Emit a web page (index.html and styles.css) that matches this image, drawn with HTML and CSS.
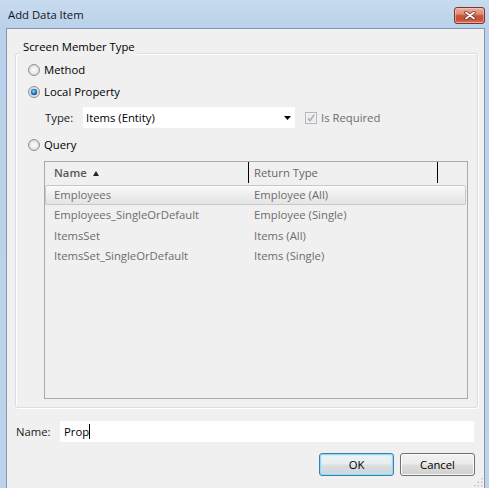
FILE: index.html
```html
<!DOCTYPE html>
<html>
<head>
<meta charset="utf-8">
<link rel="stylesheet" href="styles.css">
</head>
<body>
<div class="window">
  <div class="titlebar">
    <span class="title">Add Data Item</span>
    <div class="close">
      <svg width="12" height="9" viewBox="0 0 12 9">
        <path d="M2 1.5 L10 7.5 M10 1.5 L2 7.5" stroke="#6e2a1f" stroke-width="3.4" stroke-linecap="round"/>
        <path d="M2 1.5 L10 7.5 M10 1.5 L2 7.5" stroke="#ffffff" stroke-width="1.8" stroke-linecap="round"/>
      </svg>
    </div>
  </div>
  <div class="client">
    <div class="group">
      <div class="legend">Screen Member Type</div>
      <div class="radio-row first">
        <svg class="radio" width="12" height="12" viewBox="0 0 12 12">
          <defs><radialGradient id="ru1" cx="0.5" cy="0.5" r="0.5"><stop offset="0" stop-color="#fdfdfd"/><stop offset="0.6" stop-color="#ececec"/><stop offset="1" stop-color="#cfcfcf"/></radialGradient></defs>
          <circle cx="6" cy="6" r="5.5" fill="url(#ru1)" stroke="#939393"/>
        </svg>
        <span>Method</span>
      </div>
      <div class="radio-row second">
        <svg class="radio" width="12" height="12" viewBox="0 0 12 12">
          <defs>
            <radialGradient id="ru2" cx="0.5" cy="0.5" r="0.5"><stop offset="0" stop-color="#fdfdfd"/><stop offset="0.6" stop-color="#ececec"/><stop offset="1" stop-color="#cfcfcf"/></radialGradient>
            <radialGradient id="rb2" cx="0.45" cy="0.4" r="0.6"><stop offset="0" stop-color="#a9dcf8"/><stop offset="0.45" stop-color="#3a93d6"/><stop offset="1" stop-color="#0f4f8e"/></radialGradient>
          </defs>
          <circle cx="6" cy="6" r="5.5" fill="url(#ru2)" stroke="#939393"/>
          <circle cx="6" cy="6" r="3.2" fill="url(#rb2)"/>
        </svg>
        <span>Local Property</span>
      </div>
      <div class="type-row">
        <span class="type-label">Type:</span>
        <div class="combo">
          <span class="combo-text">Items (Entity)</span>
          <svg width="7" height="4" viewBox="0 0 7 4"><polygon points="0,0 7,0 3.5,4" fill="#000"/></svg>
        </div>
        <svg class="check" width="12" height="12" viewBox="0 0 12 12">
          <rect x="0.5" y="0.5" width="11" height="11" fill="#f4f4f4" stroke="#b5b5b5"/>
          <rect x="2" y="2" width="8" height="8" fill="#ebebeb"/>
          <path d="M3 6.2 L5 8.6 L9.2 2.6" fill="none" stroke="#a3b3c6" stroke-width="1.6"/>
        </svg>
        <span class="disabled">Is Required</span>
      </div>
      <div class="radio-row third">
        <svg class="radio" width="12" height="12" viewBox="0 0 12 12">
          <defs><radialGradient id="ru3" cx="0.5" cy="0.5" r="0.5"><stop offset="0" stop-color="#fdfdfd"/><stop offset="0.6" stop-color="#ececec"/><stop offset="1" stop-color="#cfcfcf"/></radialGradient></defs>
          <circle cx="6" cy="6" r="5.5" fill="url(#ru3)" stroke="#939393"/>
        </svg>
        <span>Query</span>
      </div>
      <div class="list">
        <div class="list-header">
          <div class="h1">Name<svg class="sort" width="6" height="5" viewBox="0 0 6 5"><polygon points="3,0 6,5 0,5" fill="#222"/></svg></div>
          <div class="divider"></div>
          <div class="h2">Return Type</div>
          <div class="divider"></div>
        </div>
        <div class="row selected"><div class="c1">Employees</div><div class="c2">Employee (All)</div></div>
        <div class="row"><div class="c1">Employees_SingleOrDefault</div><div class="c2">Employee (Single)</div></div>
        <div class="row"><div class="c1">ItemsSet</div><div class="c2">Items (All)</div></div>
        <div class="row"><div class="c1">ItemsSet_SingleOrDefault</div><div class="c2">Items (Single)</div></div>
      </div>
    </div>
    <div class="name-row">
      <span class="name-label">Name:</span>
      <div class="name-input">Prop<span class="caret"></span></div>
    </div>
    <div class="buttons">
      <div class="btn default">OK</div>
      <div class="btn">Cancel</div>
    </div>
    <svg class="grip" width="10" height="10" viewBox="0 0 10 10">
      <g fill="#c2c2c2">
        <rect x="8" y="1" width="1.5" height="1.5"/>
        <rect x="8" y="4.5" width="1.5" height="1.5"/><rect x="4.5" y="4.5" width="1.5" height="1.5"/>
        <rect x="8" y="8" width="1.5" height="1.5"/><rect x="4.5" y="8" width="1.5" height="1.5"/><rect x="1" y="8" width="1.5" height="1.5"/>
      </g>
    </svg>
  </div>
</div>
</body>
</html>
```

FILE: styles.css
```css
* { box-sizing: border-box; }
html, body { margin: 0; padding: 0; }
body {
  width: 489px;
  height: 488px;
  overflow: hidden;
  font-family: "Open Sans", "Noto Sans", sans-serif;
  font-size: 11.3px;
  color: #000;
}
.window {
  width: 489px;
  height: 488px;
  padding: 0 4px 0 6px;
  background: linear-gradient(180deg, #c8dbef 0px, #b9d1ea 28px, #bcd3eb 100%);
  display: flex;
  flex-direction: column;
}
.titlebar {
  height: 28px;
  flex: none;
  display: flex;
  align-items: flex-start;
}
.title {
  margin: 7px 0 0 2px;
  line-height: 16px;
  color: #151515;
}
.close {
  margin: 7px 0 0 auto;
  width: 31px;
  height: 17px;
  border: 1px solid #7c3528;
  border-radius: 3px;
  background: linear-gradient(180deg, #eab1a3 0%, #dc8a74 40%, #c9533b 52%, #c8503a 80%, #d9826c 100%);
  box-shadow: inset 0 0 0 1px rgba(255, 220, 210, 0.45);
  display: flex;
  align-items: center;
  justify-content: center;
}
.client {
  flex: 1;
  position: relative;
  background: #f0f0f0;
  border: 1px solid #8597ad;
  border-bottom: none;
  display: flex;
  flex-direction: column;
}
.group {
  margin: 24px 0 0 8px;
  width: 463px;
  height: 355px;
  flex: none;
  border: 1px solid #d5dfe5;
  border-radius: 3px;
  box-shadow: inset 1px 1px 0 #ffffff, 1px 1px 0 #ffffff;
  display: flex;
  flex-direction: column;
}
.legend {
  align-self: flex-start;
  margin: -15px 0 0 5px;
  padding: 0 2px;
  line-height: 16px;
  height: 16px;
  background: #f0f0f0;
}
.radio-row {
  display: flex;
  align-items: center;
  height: 21px;
  line-height: 21px;
  padding-left: 12px;
  flex: none;
}
.radio-row.first { margin-top: 4px; }
.radio-row.second { margin-top: 1px; }
.radio-row.third { margin-top: 6px; }
.radio { margin-right: 4px; flex: none; }
.type-row {
  margin-top: 5px;
  height: 21px;
  flex: none;
  display: flex;
  align-items: center;
  padding-left: 29px;
}
.type-label { width: 38px; color: #1a1a1a; }
.combo {
  width: 212px;
  height: 21px;
  background: #ffffff;
  display: flex;
  align-items: center;
  padding: 0 4px 0 3px;
}
.combo-text { flex: 1; }
.check { margin-left: 10px; flex: none; }
.disabled { margin-left: 4px; color: #6d6d6d; }
.list {
  margin: 6px 0 0 28px;
  width: 424px;
  height: 238px;
  flex: none;
  border: 1px solid #a9a9a9;
  background: #f0f0f0;
  color: #6d6d6d;
}
.list-header {
  height: 22.5px;
  line-height: 22.5px;
  display: flex;
}
.h1 {
  width: 203px;
  padding-left: 9px;
  font-weight: 600;
  color: #595959;
  display: flex;
  align-items: center;
}
.sort { margin-left: 6px; }
.divider {
  width: 1px;
  height: 21px;
  background: #000;
}
.h2 {
  width: 188px;
  padding-left: 5px;
  color: #666;
}
.row {
  height: 20.5px;
  line-height: 20.5px;
  display: flex;
  margin-right: 1px;
}
.row.selected {
  background: linear-gradient(180deg, #fbfbfb 0%, #ededed 55%, #e3e3e3 100%);
  box-shadow: inset 0 0 0 1px #c9c9c9;
  border-radius: 2px;
}
.c1 { width: 204px; padding-left: 9px; }
.c2 { padding-left: 5px; }
.name-row {
  margin-top: 13px;
  height: 21px;
  flex: none;
  display: flex;
  align-items: center;
  padding-left: 9px;
}
.name-label { width: 44px; color: #1a1a1a; }
.name-input {
  width: 414px;
  height: 21px;
  line-height: 21px;
  background: #ffffff;
  padding-left: 4px;
  display: flex;
  align-items: center;
}
.caret {
  display: inline-block;
  width: 1px;
  height: 15px;
  background: #000;
}
.buttons {
  margin-top: 11px;
  display: flex;
  justify-content: flex-end;
  gap: 6px;
  padding-right: 9px;
  flex: none;
}
.btn {
  width: 75px;
  height: 23px;
  line-height: 21px;
  text-align: center;
  border: 1px solid #707070;
  border-radius: 3px;
  background: linear-gradient(180deg, #f2f2f2 0%, #ebebeb 48%, #dddddd 52%, #cfcfcf 100%);
  box-shadow: inset 0 0 0 1px #fbfbfb;
  color: #000;
}
.btn.default {
  border-color: #3c7fb1;
  box-shadow: inset 0 0 0 1px #8fdcf2, inset 0 0 0 2px rgba(190, 236, 250, 0.5);
  background: linear-gradient(180deg, #f0f3f4 0%, #e8ecee 48%, #d9dfe2 52%, #cdd4d8 100%);
}
.grip {
  position: absolute;
  right: 1px;
  bottom: 1px;
}
```
